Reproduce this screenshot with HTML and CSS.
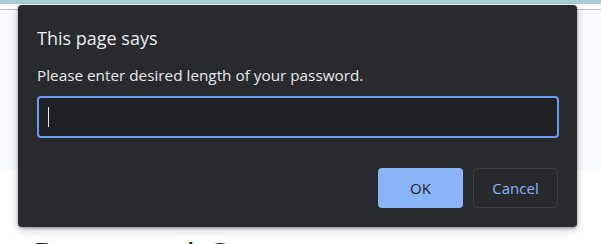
FILE: index.html
```html
<!DOCTYPE html>
<html lang="en">
<head>
<meta charset="utf-8">
<title>Password Generator</title>
<link rel="stylesheet" href="styles.css">
</head>
<body>
<div class="topbar"></div>
<div class="topgap"></div>
<div class="panel"></div>
<h1 class="heading">Password Generator</h1>

<div class="dialog" role="dialog">
  <div class="title">This page says</div>
  <div class="message">Please enter desired length of your password.</div>
  <div class="field"><span class="caret"></span></div>
  <div class="actions">
    <button class="btn btn-ok">OK</button>
    <button class="btn btn-cancel">Cancel</button>
  </div>
</div>
</body>
</html>
```

FILE: styles.css
```css
html, body {
  margin: 0;
  padding: 0;
  background: #ffffff;
  overflow: hidden;
}
body {
  font-family: "Open Sans", "Noto Sans", sans-serif;
  width: 601px;
  height: 244px;
  position: relative;
}
.topbar {
  height: 4px;
  background: #a8cfd4;
}
.topgap {
  height: 5px;
  background: #fbfcfd;
  border-bottom: 1px solid #b9bec2;
}
.panel {
  height: 160px;
  background: #f8f9fc;
}
.heading {
  margin: 64px 0 0 33px;
  font-size: 36px;
  line-height: 44px;
  font-weight: 500;
  color: #212529;
  white-space: nowrap;
}
.dialog {
  position: absolute;
  left: 18px;
  top: 5px;
  width: 522px;
  padding: 21px 18px 19px 19px;
  background: #292a2d;
  border-radius: 4px;
  box-shadow: 0 1px 3px rgba(0,0,0,0.35), 0 3px 8px rgba(0,0,0,0.2);
  display: flex;
  flex-direction: column;
}
.title {
  color: #e8eaed;
  font-size: 18px;
  line-height: 24px;
}
.message {
  margin-top: 15px;
  color: #e8eaed;
  font-size: 15.3px;
  line-height: 21px;
}
.field {
  margin-top: 10px;
  height: 38px;
  border: 2px solid #6b9cf0;
  border-radius: 4px;
  background: #202124;
  display: flex;
  align-items: center;
  padding-left: 9px;
}
.caret {
  width: 1px;
  height: 20px;
  background: #e8eaed;
}
.actions {
  margin-top: 30px;
  display: flex;
  justify-content: flex-end;
  gap: 10px;
  padding-right: 1px;
}
.btn {
  width: 85px;
  height: 40px;
  border-radius: 4px;
  font-family: "Open Sans", "Noto Sans", sans-serif;
  font-size: 15px;
  padding: 0;
  cursor: pointer;
}
.btn-ok {
  background: #8ab4f8;
  color: #202124;
  border: none;
}
.btn-cancel {
  background: #28292c;
  color: #8ab4f8;
  border: 1px solid #3c3d41;
}
```
